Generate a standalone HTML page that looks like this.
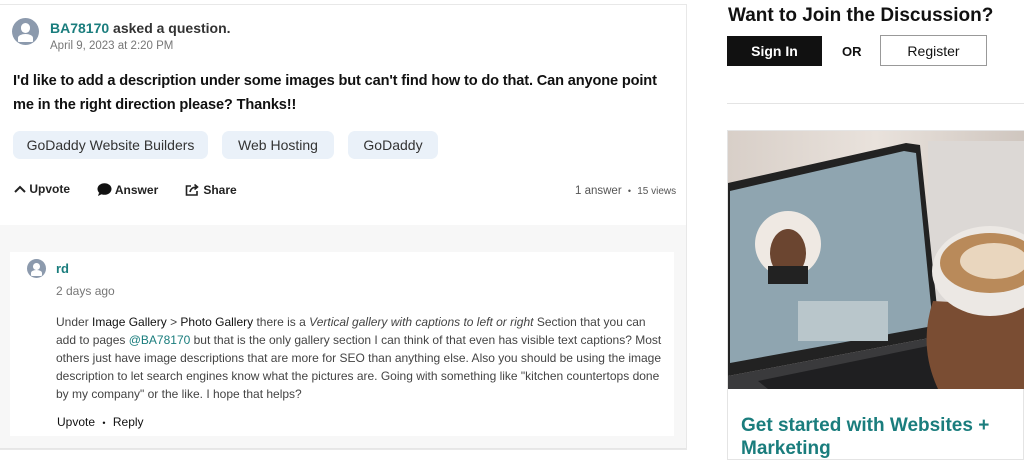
<!DOCTYPE html>
<html><head><meta charset="utf-8"><style>
*{margin:0;padding:0;box-sizing:border-box}
body{width:1024px;height:460px;overflow:hidden;background:#fff;font-family:"Liberation Sans",sans-serif;position:relative;color:#111}
.abs{position:absolute}
.card{left:0;top:4px;width:687px;height:446px;border:1px solid #e8e8e8;border-left:none;background:#fff}
.grey{left:0;top:225px;width:686px;height:224px;background:#f7f7f7;border-bottom:1px solid #e6e6e6}
.inner{left:10px;top:252px;width:664px;height:184px;background:#fff}
.av{border-radius:50%;background:#8c9aad;overflow:hidden}
.av:before{content:"";position:absolute;left:32%;top:20%;width:36%;height:36%;border-radius:50%;background:#fff}
.av:after{content:"";position:absolute;left:22%;top:60%;width:56%;height:30%;border-radius:50% 50% 10% 10%;background:#fff}
.chip{top:131px;height:28px;background:#eaf1f9;border-radius:7px;font-size:14px;color:#333;line-height:28px;text-align:center}
.act{top:183px;font-size:12px;font-weight:bold;color:#222}
p.body{font-size:12px;line-height:18px;color:#444}
</style></head><body>
<div class="abs card"></div>
<div class="abs av" style="left:12px;top:18px;width:27px;height:27px"></div>
<div class="abs" style="left:50px;top:20px;font-size:14px;font-weight:bold;color:#333"><span style="color:#1a7d7d">BA78170</span> asked a question.</div>
<div class="abs" style="left:50px;top:40px;font-size:11.5px;color:#777">April 9, 2023 at 2:20 PM</div>
<div class="abs" style="left:13px;top:69px;width:660px;font-size:14.6px;letter-spacing:-0.15px;font-weight:bold;line-height:24px;color:#111">I'd like to add a description under some images but can't find how to do that. Can anyone point me in the right direction please? Thanks!!</div>
<div class="abs chip" style="left:13px;width:195px">GoDaddy Website Builders</div>
<div class="abs chip" style="left:222px;width:112px">Web Hosting</div>
<div class="abs chip" style="left:348px;width:90px">GoDaddy</div>
<div class="abs act" style="left:14px;top:182px"><svg width="12" height="10" style="vertical-align:-1px"><path d="M1 8 L6 3 L11 8" stroke="#222" stroke-width="2" fill="none"/></svg> Upvote</div>
<div class="abs act" style="left:97px"><svg width="15" height="13" style="vertical-align:-2px"><ellipse cx="7.5" cy="6" rx="7" ry="5.8" fill="#111"/><path d="M2 10 L1 13 L5 11z" fill="#111"/></svg> Answer</div>
<div class="abs act" style="left:185px"><svg width="15" height="13" style="vertical-align:-2px"><path d="M6 3 H1.5 V12 H12 V8" stroke="#222" stroke-width="1.6" fill="none"/><path d="M5 9 Q6 4 12 4 M9.5 1.5 L12.5 4 L9.5 6.5" stroke="#222" stroke-width="1.6" fill="none"/></svg> Share</div>
<div class="abs" style="left:575px;top:185px;font-size:11.5px;color:#555">1 answer <span style="font-size:9px;margin:0 3px">•</span> <span style="font-size:10px">15 views</span></div>
<div class="abs grey"></div>
<div class="abs inner"></div>
<div class="abs av" style="left:27px;top:259px;width:19px;height:19px"></div>
<div class="abs" style="left:56px;top:261px;font-size:13px;font-weight:bold;color:#1a7d7d">rd</div>
<div class="abs" style="left:56px;top:284px;font-size:12px;color:#777">2 days ago</div>
<p class="abs body" style="left:56px;top:313px;width:610px">Under <span style="color:#111">Image Gallery</span> &gt; <span style="color:#111">Photo Gallery</span> there is a <i>Vertical gallery with captions to left or right</i> Section that you can add to pages <span style="color:#1a7d7d">@BA78170</span> but that is the only gallery section I can think of that even has visible text captions? Most others just have image descriptions that are more for SEO than anything else. Also you should be using the image description to let search engines know what the pictures are. Going with something like "kitchen countertops done by my company" or the like. I hope that helps?</p>
<div class="abs" style="left:57px;top:415px;font-size:12px;color:#111">Upvote <span style="font-size:9px;margin:0 4px">•</span> Reply</div>

<div class="abs" style="left:728px;top:5px;font-size:19px;font-weight:bold;color:#111">Want to Join the Discussion?</div>
<div class="abs" style="left:727px;top:36px;width:95px;height:30px;background:#111;color:#fff;font-size:14px;font-weight:bold;text-align:center;line-height:30px">Sign In</div>
<div class="abs" style="left:842px;top:44px;font-size:13px;font-weight:bold">OR</div>
<div class="abs" style="left:880px;top:35px;width:107px;height:31px;border:1px solid #999;font-size:14px;text-align:center;line-height:30px">Register</div>
<div class="abs" style="left:727px;top:103px;width:297px;height:1px;background:#e4e4e4"></div>
<div class="abs" style="left:727px;top:130px;width:297px;height:330px;border:1px solid #e4e4e4"></div>
<svg class="abs" style="left:728px;top:131px" width="296" height="258" viewBox="0 0 296 258">
<defs><linearGradient id="bg" x1="0" y1="0" x2="1" y2="0"><stop offset="0" stop-color="#d8cfc8"/><stop offset="0.5" stop-color="#e9e2dc"/><stop offset="1" stop-color="#cfc6bf"/></linearGradient></defs>
<rect width="296" height="258" fill="url(#bg)"/>
<rect x="200" y="10" width="96" height="248" fill="#dcd8d5"/>
<path d="M0 52 L178 12 L192 14 L212 205 L0 245z" fill="#222"/>
<path d="M2 60 L176 20 L188 22 L205 195 L2 232z" fill="#8fa5b0"/>
<path d="M0 245 L212 205 L240 258 L0 258z" fill="#3a3a3c"/>
<path d="M30 250 L200 215 L225 258 L40 258z" fill="#1f1f21"/>
<circle cx="60" cy="113" r="33" fill="#efe9e3"/>
<ellipse cx="60" cy="122" rx="18" ry="24" fill="#6b4530"/>
<rect x="40" y="135" width="40" height="18" fill="#222"/>
<rect x="70" y="170" width="90" height="40" fill="#b9c6cb"/>
<path d="M205 170 Q190 215 210 258 L296 258 L296 175z" fill="#7a4d33"/>
<ellipse cx="262" cy="140" rx="58" ry="45" fill="#ece8e4"/>
<ellipse cx="262" cy="132" rx="50" ry="30" fill="#b98a5a"/>
<ellipse cx="266" cy="130" rx="34" ry="18" fill="#e9d6be"/>
</svg>
<div class="abs" style="left:741px;top:414px;width:280px;font-size:19px;font-weight:bold;color:#1a7d7d;line-height:23px">Get started with Websites + Marketing</div>
</body></html>
